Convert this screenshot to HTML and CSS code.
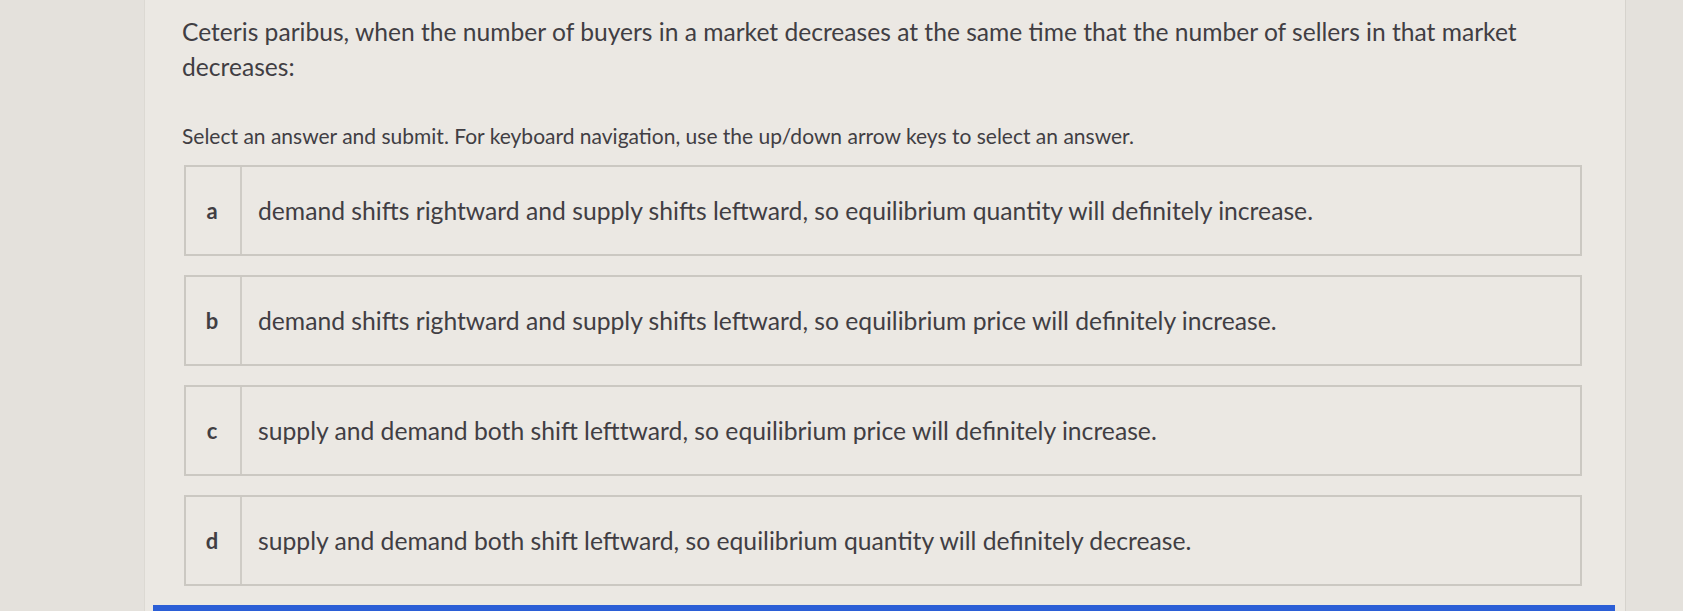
FILE: index.html
```html
<!DOCTYPE html>
<html lang="en">
<head>
<meta charset="utf-8">
<title>Question</title>
<link rel="stylesheet" href="styles.css">
</head>
<body>
<div class="page">
  <main class="panel">
    <p class="question">Ceteris paribus, when the number of buyers in a market decreases at the same time that the number of sellers in that market decreases:</p>
    <p class="hint">Select an answer and submit. For keyboard navigation, use the up/down arrow keys to select an answer.</p>
    <ul class="options">
      <li class="option"><span class="letter">a</span><span class="text">demand shifts rightward and supply shifts leftward, so equilibrium quantity will definitely increase.</span></li>
      <li class="option"><span class="letter">b</span><span class="text">demand shifts rightward and supply shifts leftward, so equilibrium price will definitely increase.</span></li>
      <li class="option"><span class="letter">c</span><span class="text">supply and demand both shift lefttward, so equilibrium price will definitely increase.</span></li>
      <li class="option"><span class="letter">d</span><span class="text">supply and demand both shift leftward, so equilibrium quantity will definitely decrease.</span></li>
    </ul>
    <div class="submit-bar"></div>
  </main>
</div>
</body>
</html>
```

FILE: styles.css
```css
html, body {
  margin: 0;
  padding: 0;
  height: 100%;
}
body {
  background: #e4e1dc;
  font-family: "Lato", "Liberation Sans", sans-serif;
  color: #413e43;
  overflow: hidden;
}
.page {
  display: flex;
  height: 611px;
  padding-left: 145px;
}
.panel {
  width: 1480px;
  background: #ebe8e3;
  box-shadow: -1px 0 0 #dcd9d3, 1px 0 0 #d6d3cd;
  padding: 14px 0 0 37px;
  box-sizing: border-box;
  display: flex;
  flex-direction: column;
}
.question {
  margin: 0;
  font-size: 24.6px;
  line-height: 35px;
  width: 1380px;
}
.hint {
  margin: 38px 0 0;
  font-size: 21px;
  line-height: 28px;
}
.options {
  list-style: none;
  margin: 15px 0 0 2px;
  padding: 0;
  display: flex;
  flex-direction: column;
  gap: 19px;
  width: 1398px;
}
.option {
  display: flex;
  height: 91px;
  border: 2px solid #cbc8c2;
  box-sizing: border-box;
}
.letter {
  width: 56px;
  flex: none;
  border-right: 2px solid #cfccc6;
  display: flex;
  align-items: center;
  justify-content: center;
  font-size: 22px;
  font-weight: 700;
  padding-right: 2px;
  box-sizing: border-box;
}
.text {
  display: flex;
  align-items: center;
  padding-left: 16px;
  font-size: 24.7px;
}
.submit-bar {
  margin: 19px 0 0 -29px;
  width: 1462px;
  height: 8px;
  background: #2b5ed6;
}
```
